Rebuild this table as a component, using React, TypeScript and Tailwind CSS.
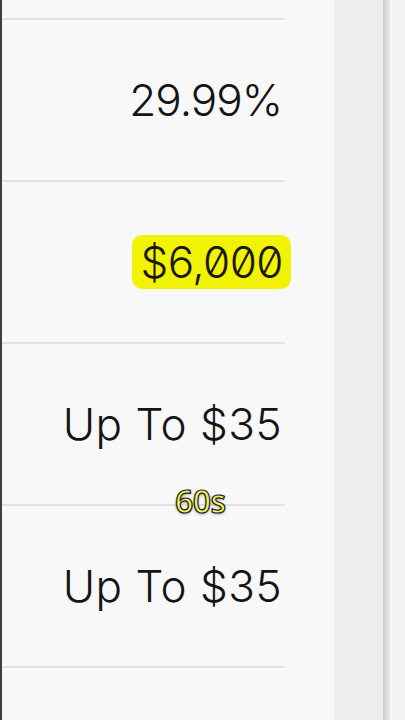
import React from "react";

const font = { fontFamily: "Inter, 'Liberation Sans', sans-serif" };

function Line() {
  return <div className="h-[2px] w-[283px] bg-[#e2e2e2]" />;
}

function Row({ children }: { children: React.ReactNode }) {
  return (
    <div className="h-[160px] w-[283px] flex items-center justify-end pr-[3px]">
      {children}
    </div>
  );
}

export default function App() {
  return (
    <div className="relative w-[405px] h-[720px] flex overflow-hidden bg-[#f8f8f8]" style={font}>
      <div className="w-[2px] h-full bg-[#3f3f3f]" />
      <div className="w-[332px] h-full bg-[#f8f8f8] flex flex-col pt-[18px] text-[#141414] text-[44px] leading-none font-[350] [font-feature-settings:'zero']">
        <Line />
        <Row>
          <span className="tracking-[-1px]">29.99%</span>
        </Row>
        <Line />
        <Row>
          <span className="-mr-[9px] bg-[#f2f205] rounded-[10px] px-[8px] h-[54px] flex items-center text-[#1a1800] tracking-[-0.5px]">
            $6,000
          </span>
        </Row>
        <Line />
        <Row>
          <span className="tracking-[0.5px]">Up To $35</span>
        </Row>
        <Line />
        <Row>
          <span className="tracking-[0.5px]">Up To $35</span>
        </Row>
        <Line />
      </div>
      <div className="w-[49px] h-full bg-[#eeeeee]" />
      <div className="w-[7px] h-full bg-gradient-to-r from-[#cbcbcb] to-[#ebebeb]" />
      <div className="flex-1 h-full bg-[#f4f4f4]" />
      <div
        className="absolute left-[175px] top-[485px] text-[32px] font-semibold text-[#f2f25a] leading-none tracking-[-0.5px]"
        style={{
          fontFamily: "'Open Sans', 'Liberation Sans', sans-serif",
          WebkitTextStroke: "1.2px #1e1e1e",
          textShadow: "0 1px 3px rgba(0,0,0,0.45)",
        }}
      >
        60s
      </div>
    </div>
  );
}
